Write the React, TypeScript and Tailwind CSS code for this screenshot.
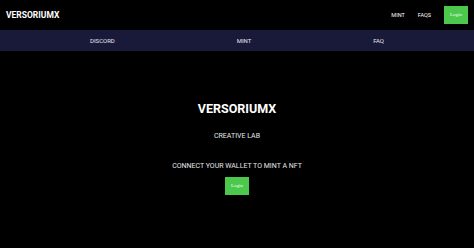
export default function App() {
  return (
    <div className="min-h-[248px] w-full bg-black text-white font-['Roboto',sans-serif]">
      <header className="flex h-[30px] items-center justify-between pl-[6px] pr-[6px]">
        <h1 className="text-[8.5px] font-bold">VERSORIUMX</h1>
        <nav className="flex items-center">
          <a className="text-[5.5px] mr-[13px]">MINT</a>
          <a className="text-[5.5px] mr-[13px]">FAQS</a>
          <button className="w-[24px] h-[18px] bg-[#4cc94c] text-[5px] font-['Liberation_Serif',serif] text-white/90">
            Login
          </button>
        </nav>
      </header>
      <div className="flex h-[21px] items-center justify-between bg-[#19193a] px-[90px] text-[6px] text-gray-200">
        <span>DISCORD</span>
        <span>MINT</span>
        <span>FAQ</span>
      </div>
      <main className="flex flex-col items-center pt-[52px]">
        <h2 className="text-[12.5px] font-bold leading-none">VERSORIUMX</h2>
        <p className="mt-[17px] text-[7px] leading-none text-gray-200">CREATIVE LAB</p>
        <p className="mt-[23px] text-[7px] leading-none text-gray-200">CONNECT YOUR WALLET TO MINT A NFT</p>
        <button className="mt-[7px] w-[24px] h-[18px] bg-[#4cc94c] text-[5px] font-['Liberation_Serif',serif] text-white/90">
          Login
        </button>
      </main>
    </div>
  );
}
